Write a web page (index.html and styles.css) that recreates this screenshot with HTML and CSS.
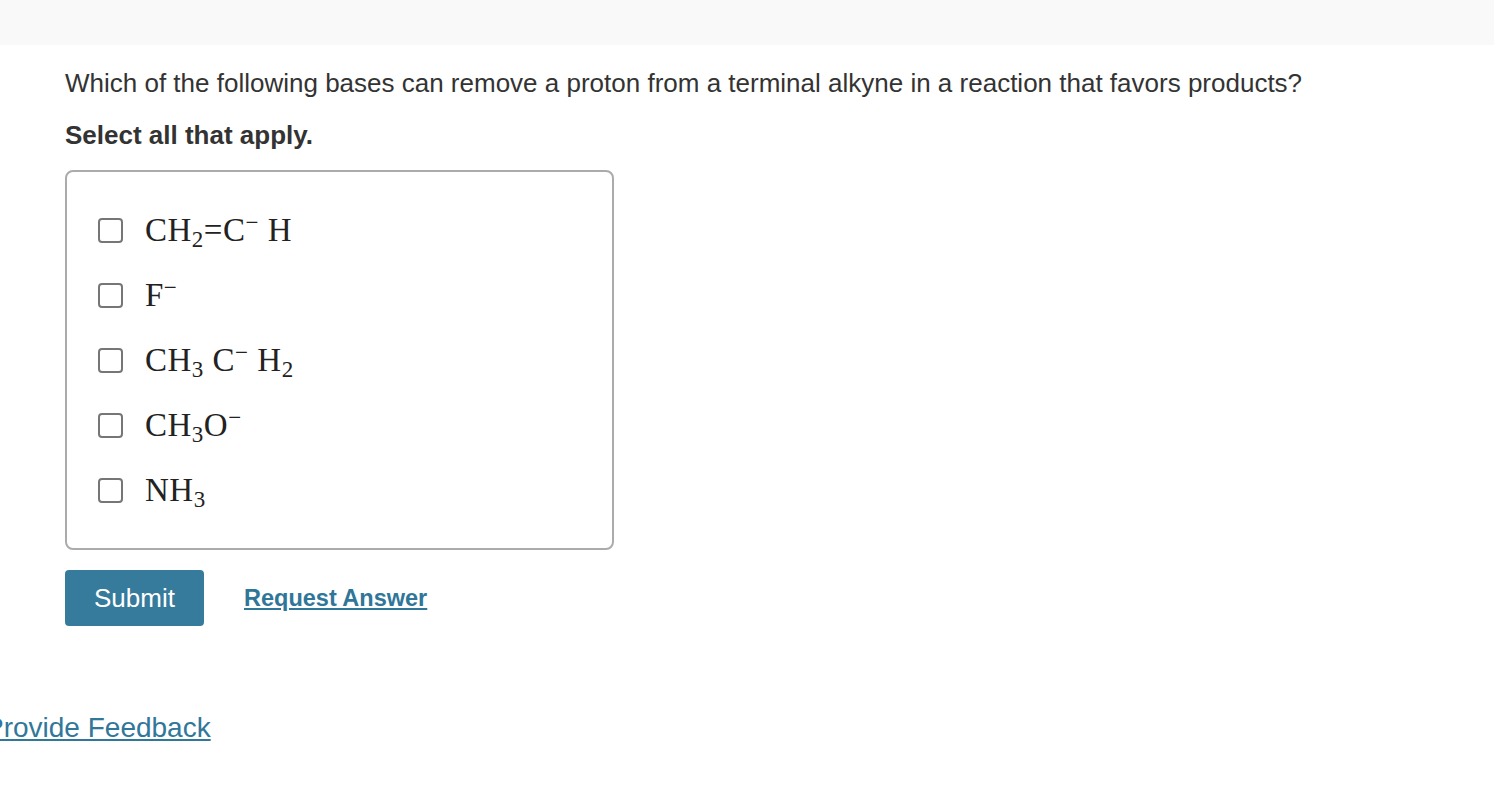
FILE: index.html
```html
<!DOCTYPE html>
<html lang="en">
<head>
    <meta charset="UTF-8">
    <title>Question</title>
    <link rel="stylesheet" href="styles.css">
</head>
<body>
    <div class="top-bar"></div>

    <div class="question">
        <p class="prompt">Which of the following bases can remove a proton from a terminal alkyne in a reaction that favors products?</p>
        <p class="instruction">Select all that apply.</p>

        <div class="choices">
            <label class="choice">
                <span class="box"></span>
                <span class="math">CH<sub>2</sub>=C<sup>−</sup>&nbsp;H</span>
            </label>
            <label class="choice">
                <span class="box"></span>
                <span class="math">F<sup>−</sup></span>
            </label>
            <label class="choice">
                <span class="box"></span>
                <span class="math">CH<sub>3</sub>&nbsp;C<sup>−</sup>&nbsp;H<sub>2</sub></span>
            </label>
            <label class="choice">
                <span class="box"></span>
                <span class="math">CH<sub>3</sub>O<sup>−</sup></span>
            </label>
            <label class="choice">
                <span class="box"></span>
                <span class="math">NH<sub>3</sub></span>
            </label>
        </div>

        <div class="actions">
            <button class="submit-btn">Submit</button>
            <a href="#" class="request-link">Request Answer</a>
        </div>
    </div>

    <div class="footer">
        <a href="#" class="feedback-link">Provide Feedback</a>
    </div>
</body>
</html>
```

FILE: styles.css
```css
body {
    font-family: "Liberation Sans", Arial, sans-serif;
    margin: 0;
    color: #333;
    background: #fff;
}

.top-bar {
    height: 45px;
    background-color: #f9f9f9;
}

.question {
    padding: 0 65px;
}

.prompt {
    font-size: 26px;
    margin: 22px 0 0 0;
    line-height: 32px;
}

.instruction {
    font-size: 26px;
    font-weight: bold;
    margin: 20px 0 0 0;
    line-height: 32px;
}

.choices {
    width: 545px;
    margin-top: 19px;
    border: 2px solid #ababab;
    border-radius: 8px;
    padding: 40px 0 40px 0;
    display: flex;
    flex-direction: column;
    gap: 29px;
}

.choice {
    display: flex;
    align-items: center;
    height: 36px;
    padding-left: 31px;
}

.box {
    width: 21px;
    height: 21px;
    border: 2px solid #767676;
    border-radius: 4px;
    margin-right: 22px;
}

.math {
    font-family: "Liberation Serif", "Times New Roman", serif;
    font-size: 33px;
    letter-spacing: 0.5px;
    color: #222;
    line-height: 36px;
}

.math sub {
    font-size: 23px;
    vertical-align: -6px;
    line-height: 0;
}

.math sup {
    font-size: 23px;
    vertical-align: 11px;
    line-height: 0;
}

.actions {
    display: flex;
    align-items: center;
    gap: 40px;
    margin-top: 20px;
}

.submit-btn {
    font-family: "Liberation Sans", Arial, sans-serif;
    font-size: 26px;
    color: #fff;
    background-color: #367a9c;
    border: none;
    border-radius: 4px;
    width: 139px;
    height: 56px;
    cursor: pointer;
}

.request-link {
    font-size: 23.5px;
    font-weight: bold;
    color: #2f7698;
    text-decoration: underline;
}

.footer {
    margin-top: 86px;
}

.feedback-link {
    display: inline-block;
    margin-left: -15px;
    font-size: 28px;
    color: #31779a;
    text-decoration: underline;
}
```
